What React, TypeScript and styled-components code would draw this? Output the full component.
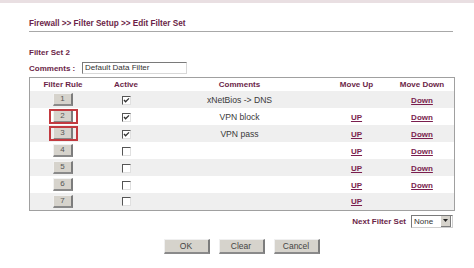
import React from "react";
import styled, { createGlobalStyle } from "styled-components";

const GlobalStyle = createGlobalStyle`
  html, body {
    margin: 0;
    padding: 0;
    background: #ffffff;
    font-family: "Liberation Sans", Arial, sans-serif;
  }
`;

const maroon = "#6b1f48";

const TopBand = styled.div`
  height: 3px;
  background: #e9dfe2;
`;

const Page = styled.div`
  width: 424px;
  margin-left: 29px;
  padding-top: 15px;
`;

const Title = styled.div`
  font-size: 8.2px;
  font-weight: bold;
  color: ${maroon};
  line-height: 12px;
  padding-bottom: 1px;
  border-bottom: 1px solid #a8a8a8;
`;

const SetName = styled.div`
  margin-top: 16px;
  font-size: 8px;
  font-weight: bold;
  color: ${maroon};
  line-height: 10px;
`;

const CommentRow = styled.div`
  display: flex;
  align-items: center;
  gap: 6px;
  margin-top: 3px;
  height: 14px;
`;

const Label = styled.span`
  font-size: 8px;
  font-weight: bold;
  color: ${maroon};
  width: 47px;
`;

const TextBox = styled.div`
  width: 101px;
  height: 10px;
  border: 1px solid #7a7a7a;
  border-right-color: #d8d8d8;
  border-bottom-color: #d8d8d8;
  padding: 0 0 0 2px;
  font-size: 8px;
  line-height: 10px;
  color: #333;
`;

const Table = styled.table`
  margin-top: 2px;
  width: 424px;
  border-collapse: collapse;
  border: 1px solid #a0a0a0;
  table-layout: fixed;
`;

const Th = styled.th<{ $w: number }>`
  width: ${(p) => p.$w}px;
  height: 13px;
  padding: 0;
  font-size: 8px;
  font-weight: bold;
  color: ${maroon};
  text-align: center;
  background: #ffffff;
`;

const Row = styled.tr<{ $shade: boolean }>`
  height: 17px;
  background: ${(p) => (p.$shade ? "#efefef" : "#ffffff")};
`;

const Td = styled.td`
  padding: 0;
  text-align: center;
  font-size: 8.6px;
  color: #3a3a3a;
`;

const RuleCell = styled.span`
  position: relative;
  display: inline-block;
  vertical-align: middle;
`;

const RuleButton = styled.span`
  display: inline-block;
  width: 20px;
  height: 13px;
  box-sizing: border-box;
  background: #d6d3cc;
  border-top: 1px solid #f2f2f2;
  border-left: 1px solid #f2f2f2;
  border-right: 2px solid #7c7c7c;
  border-bottom: 2px solid #8a8a8a;
  font-size: 8px;
  line-height: 10px;
  color: #555;
  text-align: center;
`;

const RedFrame = styled.span`
  position: absolute;
  left: -4px;
  right: -5px;
  top: -1px;
  bottom: -1px;
  border: 2px solid #c23a40;
`;

const Check = styled.span`
  display: inline-block;
  vertical-align: middle;
  width: 7px;
  height: 7px;
  border-top: 1px solid #555;
  border-left: 1px solid #555;
  border-right: 1px solid #e0e0e0;
  border-bottom: 1px solid #e0e0e0;
  background: #fff;
  position: relative;
  svg {
    position: absolute;
    left: 0;
    top: 0;
  }
`;

const Link = styled.a`
  font-size: 8px;
  font-weight: bold;
  color: #7a1e4e;
  text-decoration: underline;
  cursor: pointer;
`;

const NextRow = styled.div`
  display: flex;
  justify-content: flex-end;
  align-items: center;
  gap: 5px;
  margin-top: 4px;
  height: 13px;
`;

const NextLabel = styled.span`
  font-size: 8px;
  font-weight: bold;
  color: ${maroon};
`;

const Select = styled.div`
  display: flex;
  align-items: center;
  justify-content: space-between;
  width: 42px;
  height: 13px;
  box-sizing: border-box;
  border: 1px solid #7a7a7a;
  border-right-color: #cfcfcf;
  border-bottom-color: #cfcfcf;
  padding-left: 2px;
  font-size: 8px;
  color: #333;
  background: #fff;
`;

const SelectArrow = styled.span`
  width: 9px;
  height: 10px;
  margin-right: 1px;
  background: #d6d3cc;
  border-right: 1px solid #7c7c7c;
  border-bottom: 1px solid #7c7c7c;
  display: flex;
  align-items: center;
  justify-content: center;
`;

const Actions = styled.div`
  display: flex;
  justify-content: center;
  gap: 9px;
  margin-top: 11px;
  margin-left: 1px;
`;

const ActionButton = styled.button`
  width: 46px;
  height: 15px;
  box-sizing: border-box;
  padding: 0;
  background: #d6d3cc;
  border: none;
  border-top: 1px solid #f0f0f0;
  border-left: 1px solid #f0f0f0;
  border-right: 2px solid #7c7c7c;
  border-bottom: 2px solid #8a8a8a;
  font-family: "Liberation Sans", Arial, sans-serif;
  font-size: 8.5px;
  color: #444;
`;

type RuleRow = { active: boolean; comment: string; up: boolean; down: boolean; marked: boolean };

const rows: RuleRow[] = [
  { active: true, comment: "xNetBios -> DNS", up: false, down: true, marked: false },
  { active: true, comment: "VPN block", up: true, down: true, marked: true },
  { active: true, comment: "VPN pass", up: true, down: true, marked: true },
  { active: false, comment: "", up: true, down: true, marked: false },
  { active: false, comment: "", up: true, down: true, marked: false },
  { active: false, comment: "", up: true, down: true, marked: false },
  { active: false, comment: "", up: true, down: false, marked: false },
];

const CheckBox = ({ checked }: { checked: boolean }) => (
  <Check>
    {checked && (
      <svg width="7" height="7" viewBox="0 0 7 7">
        <path d="M1 3 L2.6 4.8 L6 1.4" stroke="#333" strokeWidth="1.3" fill="none" />
      </svg>
    )}
  </Check>
);

export default function App() {
  return (
    <>
      <GlobalStyle />
      <TopBand />
      <Page>
        <Title>Firewall &gt;&gt; Filter Setup &gt;&gt; Edit Filter Set</Title>
        <SetName>Filter Set 2</SetName>
        <CommentRow>
          <Label>Comments :</Label>
          <TextBox>Default Data Filter</TextBox>
        </CommentRow>
        <Table>
          <thead>
            <tr>
              <Th $w={66}>Filter Rule</Th>
              <Th $w={60}>Active</Th>
              <Th $w={167}>Comments</Th>
              <Th $w={67}>Move Up</Th>
              <Th $w={64}>Move Down</Th>
            </tr>
          </thead>
          <tbody>
            {rows.map((r, i) => (
              <Row key={i} $shade={i % 2 === 0}>
                <Td>
                  <RuleCell>
                    <RuleButton>{i + 1}</RuleButton>
                    {r.marked && <RedFrame />}
                  </RuleCell>
                </Td>
                <Td>
                  <CheckBox checked={r.active} />
                </Td>
                <Td>{r.comment}</Td>
                <Td>{r.up && <Link>UP</Link>}</Td>
                <Td>{r.down && <Link>Down</Link>}</Td>
              </Row>
            ))}
          </tbody>
        </Table>
        <NextRow>
          <NextLabel>Next Filter Set</NextLabel>
          <Select>
            None
            <SelectArrow>
              <svg width="5" height="3" viewBox="0 0 5 3">
                <path d="M0 0 H5 L2.5 3 Z" fill="#222" />
              </svg>
            </SelectArrow>
          </Select>
        </NextRow>
        <Actions>
          <ActionButton>OK</ActionButton>
          <ActionButton>Clear</ActionButton>
          <ActionButton>Cancel</ActionButton>
        </Actions>
      </Page>
    </>
  );
}
